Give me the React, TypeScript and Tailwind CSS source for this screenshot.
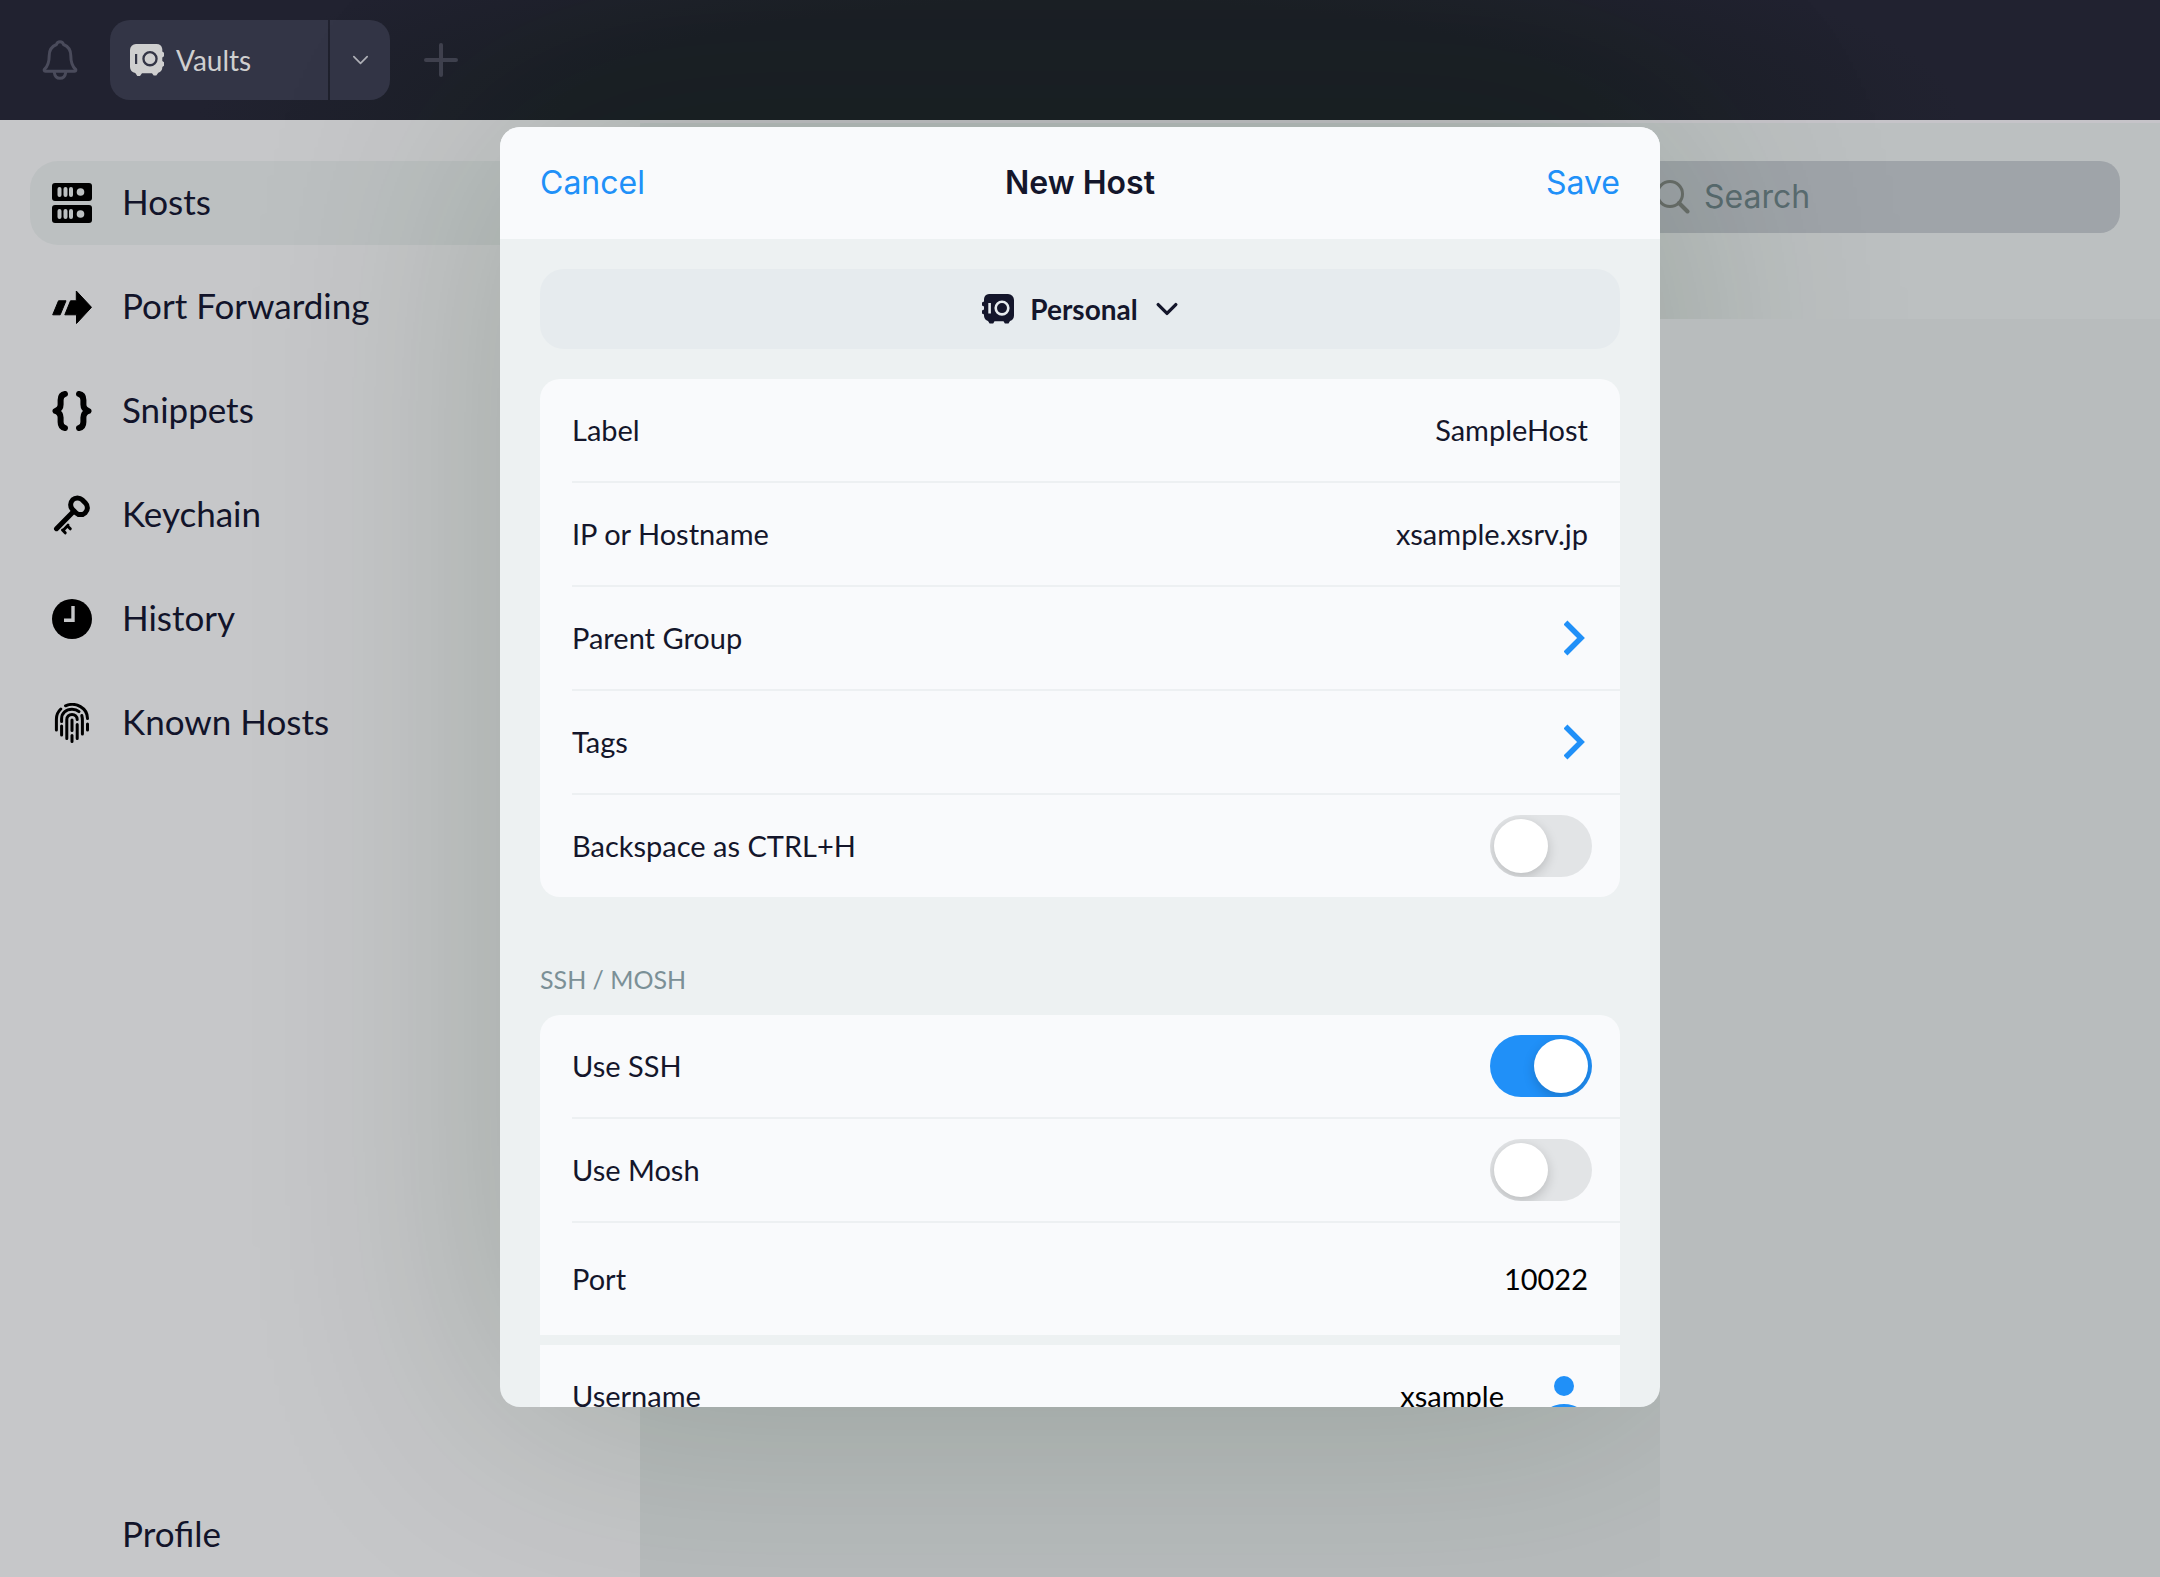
import { useId, useState } from "react";

interface IconProps {
  className?: string;
}

function BellIcon({ className }: IconProps) {
  return (
    <svg viewBox="0 0 36 40" className={className} fill="none" stroke="currentColor" strokeWidth="3" strokeLinejoin="round" strokeLinecap="round">
      <path d="M14.5 4.5a3.6 3.6 0 0 1 7 0c4.600 1.800 7.300 6 7.300 11.300 0 7.200 1.700 10.700 4.600 13.300.8.900.5 2.100-.7 2.100H3.300c-1.200 0-1.500-1.200-.7-2.100 2.900-2.600 4.600-6.100 4.600-13.300 0-5.300 2.700-9.500 7.300-11.300z" />
      <path d="M12.300 32.500c.5 3.600 2.700 5.800 5.700 5.800s5.200-2.200 5.700-5.800" />
    </svg>
  );
}

/* safe with the hinges on its right side */
function VaultIcon({ className }: IconProps) {
  return (
    <svg viewBox="0 0 34 33" className={className} fill="currentColor" fillRule="evenodd">
      <path d="M6 0h20.500a6 6 0 0 1 5.800 5v2.500l2 1.500v3l-2 1.500v3.500l2 1.500v3l-2 1.500v1a6 6 0 0 1-4 4.800l-2 2.700h-2.600L22 29.200H12l-2 2.800H7.300l-2-2.900A6.500 6.500 0 0 1 0 23V6a6 6 0 0 1 6-6zM5 10v10h2.200V10zM20 7a7.700 7.700 0 1 0 0 15.400A7.700 7.700 0 0 0 20 7zm0 2.300a5.400 5.400 0 1 1 0 10.800 5.400 5.400 0 0 1 0-10.800z" />
    </svg>
  );
}

/* safe with the hinges on its left side */
function PersonalVaultIcon({ className }: IconProps) {
  return (
    <svg viewBox="0 0 32 30" className={className} fill="currentColor" fillRule="evenodd">
      <path d="M7 0h19a6 6 0 0 1 6 6v15.500a6 6 0 0 1-4 5.500l-1.500 2.500h-3.600L21.500 27.300h-9L11.200 29.500H7.600L6 27a6 6 0 0 1-4-5v-1.500l-2-1v-3l2-1v-3l-2-1V8.500l2-1V5a5.500 5.500 0 0 1 5-5zM6.300 9v10.500h2.600V9zM20 6.500a7.600 7.600 0 1 0 0 15.200 7.600 7.600 0 0 0 0-15.200zm0 2.600a5 5 0 1 1 0 10 5 5 0 0 1 0-10z" />
    </svg>
  );
}

function HostsIcon({ className }: IconProps) {
  return (
    <svg viewBox="0 0 40 40" className={className} fill="currentColor">
      {[0, 22].map((y) => (
        <g key={y} transform={`translate(0 ${y})`}>
          <rect width="40" height="18" rx="3" />
          <g fill="#bcc0c1">
            <rect x="5.500" y="4" width="4" height="10" rx="2" />
            <rect x="11.500" y="4" width="4" height="10" rx="2" />
            <rect x="17" y="4" width="4" height="10" rx="2" />
            <circle cx="28.500" cy="9" r="3.800" />
          </g>
        </g>
      ))}
    </svg>
  );
}

function ForwardIcon({ className }: IconProps) {
  return (
    <svg viewBox="0 0 40 40" className={className} fill="currentColor" stroke="currentColor" strokeWidth="1" strokeLinejoin="round">
      <path d="M.700 27.800 6.500 13.800h7.500L8.200 27.800zM12.800 27.800l5.700-14h5.800V4L39.500 20.300 24.500 36.500v-8.700z" />
    </svg>
  );
}

function BracesIcon({ className }: IconProps) {
  return (
    <svg viewBox="0 0 40 40" className={className} fill="none" stroke="currentColor" strokeWidth="6" strokeLinecap="round" strokeLinejoin="round">
      <path d="M13 3C9.500 3.600 8.600 6 8.600 9v4.500c0 3.500-1.600 5.300-5.100 6.500 3.500 1.200 5.100 3 5.100 6.500V31c0 3 .9 5.400 4.400 6" />
      <path d="M27 3c3.500.6 4.400 3 4.400 6v4.500c0 3.500 1.600 5.300 5.100 6.500-3.500 1.200-5.100 3-5.100 6.500V31c0 3-.9 5.400-4.400 6" />
    </svg>
  );
}

function KeyIcon({ className }: IconProps) {
  return (
    <svg viewBox="0 0 40 40" className={className} fill="none" stroke="currentColor" strokeLinecap="round">
      <rect x="18" y="4.500" width="18" height="13.500" rx="6.700" strokeWidth="5" transform="rotate(45 27 11.250)" />
      <path d="M21.500 16.500 4.500 33.700" strokeWidth="5" />
      <path d="m10.500 35 2.700 2.800M15.500 31l2.800 2.800M11 35.500l5-5.300" strokeWidth="3" />
    </svg>
  );
}

function ClockIcon({ className }: IconProps) {
  return (
    <svg viewBox="0 0 40 40" className={className}>
      <circle cx="20" cy="20" r="20" fill="currentColor" />
      <path d="M21 7v14.300h-9" fill="none" stroke="#c6c7c9" strokeWidth="3.400" />
    </svg>
  );
}

function FingerprintIcon({ className }: IconProps) {
  return (
    <svg viewBox="0 0 40 40" className={className} fill="none" stroke="currentColor" strokeWidth="3" strokeLinecap="round">
      <path d="M13.500 2.800C24 -1.500 35.500 5 35.500 15.500M8.800 6C5.500 9 4.400 12 4.400 16v11" />
      <path d="M9.600 18.500v-2.800C9.600 10 14 6.300 20 6.300c3 0 5.300.8 7 2.300M29.800 12.500c.4 1.500.6 3 .6 5V31M9.600 23v9" />
      <path d="M14.800 35.500V16.500c0-3.200 2.200-5 5.200-5s5.200 1.800 5.200 5M25.200 21.500v14M20 17v10.500M20 32.500v6M35.500 21v6" />
    </svg>
  );
}

function ChevronDown({ className, width }: IconProps & { width: number }) {
  return (
    <svg viewBox="0 0 20 12" className={className} fill="none" stroke="currentColor" strokeWidth={width} strokeLinecap="round" strokeLinejoin="round">
      <path d="m2 2 8 8 8-8" />
    </svg>
  );
}

function ChevronRight() {
  return (
    <svg viewBox="0 0 24 36" className="h-9 w-6 text-[#2090f8]" fill="none" stroke="currentColor" strokeWidth="5.500">
      <path d="m1.500 2.500 15.500 15.500L1.500 33.500" />
    </svg>
  );
}

function UserIcon() {
  return (
    <svg viewBox="0 0 48 44" className="h-11 w-12 text-[#2090f8]" fill="currentColor">
      <circle cx="24" cy="12" r="10" />
      <ellipse cx="24" cy="46" rx="22" ry="16" />
    </svg>
  );
}

const navItems = [
  { label: "Hosts", Icon: HostsIcon, active: true },
  { label: "Port Forwarding", Icon: ForwardIcon },
  { label: "Snippets", Icon: BracesIcon },
  { label: "Keychain", Icon: KeyIcon },
  { label: "History", Icon: ClockIcon },
  { label: "Known Hosts", Icon: FingerprintIcon },
];

function TopBar() {
  return (
    <header className="flex h-[120px] shrink-0 items-center bg-[radial-gradient(60%_250%_at_50%_100%,#1b1f26_40%,#212230_68%)] pl-[42px]">
      <button aria-label="Notifications" className="text-[#4a4b5b]">
        <BellIcon className="h-10 w-9" />
      </button>
      <div className="ml-8 flex h-20 gap-0.5 overflow-hidden rounded-[20px]">
        <button className="flex w-[218px] items-center gap-3 bg-[#333546] pl-5 text-[28px] text-[#cfcfcf]">
          <VaultIcon className="h-[33px] w-[34px]" />
          Vaults
        </button>
        <button aria-label="Switch tab" className="flex w-[60px] items-center justify-center bg-[#333546] text-[#b0b1b8]">
          <ChevronDown className="h-[10px] w-[17px]" width={2} />
        </button>
      </div>
      <button aria-label="New tab" className="ml-[34px] text-[#40424f]">
        <svg viewBox="0 0 34 34" className="size-[34px]" fill="none" stroke="currentColor" strokeWidth="4" strokeLinecap="round">
          <path d="M17 2v30M2 17h30" />
        </svg>
      </button>
    </header>
  );
}

function Sidebar() {
  return (
    <aside className="flex w-[640px] shrink-0 flex-col justify-between bg-[#c6c7c9] px-[30px] pt-[41px] text-[35px] text-[#12142a]">
      <nav className="flex flex-col gap-5">
        {navItems.map(({ label, Icon, active }) => (
          <a
            key={label}
            href="#"
            className={`flex h-[84px] items-center gap-[30px] rounded-[28px] pl-[22px] ${active ? "bg-[#bcc0c1]" : ""}`}
          >
            <Icon className="size-10 text-black" />
            <span className="pb-1">{label}</span>
          </a>
        ))}
      </nav>
      <a href="#" className="flex h-[84px] items-center pl-[92px]">
        <span className="pb-1">Profile</span>
      </a>
    </aside>
  );
}

function SearchBar() {
  return (
    <div className="flex h-[199px] shrink-0 items-start justify-end border-t-[3px] border-[#c6c4c9] bg-[#bcc0c1] px-10 pt-[38px]">
      <label className="flex h-[72px] w-[480px] items-center gap-[14px] rounded-[20px] bg-[#9fa4a9] pl-4 font-['Inter',sans-serif]">
        <svg viewBox="0 0 34 34" className="size-[34px] text-[#6a6e6b]" fill="none" stroke="currentColor" strokeWidth="3" strokeLinecap="round">
          <circle cx="14" cy="14" r="12.500" />
          <path d="m23 23 8.500 8.500" strokeWidth="4" />
        </svg>
        <input
          type="search"
          aria-label="Search"
          placeholder="Search"
          className="min-w-0 flex-1 bg-transparent text-[32px] outline-none placeholder:text-[#5a6c70]"
        />
      </label>
    </div>
  );
}

interface RowProps {
  label: string;
  htmlFor?: string;
  divider?: boolean;
  className?: string;
  children: React.ReactNode;
}

function Row({ label, htmlFor, divider = true, className = "h-[102px]", children }: RowProps) {
  return (
    <div className={`ml-8 box-content flex items-center justify-between pr-8 ${className} ${divider ? "border-b-2 border-[#edf0f2]" : ""}`}>
      <label htmlFor={htmlFor}>{label}</label>
      {children}
    </div>
  );
}

function TextRow({ label, value }: { label: string; value: string }) {
  const id = useId();
  return (
    <Row label={label} htmlFor={id}>
      <input id={id} defaultValue={value} className="min-w-0 flex-1 bg-transparent text-right outline-none" />
    </Row>
  );
}

function LinkRow({ label }: { label: string }) {
  const id = useId();
  return (
    <Row label={label} htmlFor={id}>
      <button id={id}>
        <ChevronRight />
      </button>
    </Row>
  );
}

function SwitchRow({ label, initial = false, divider }: { label: string; initial?: boolean; divider?: boolean }) {
  const id = useId();
  const [on, setOn] = useState(initial);
  return (
    <Row label={label} htmlFor={id} divider={divider}>
      <input
        id={id}
        type="checkbox"
        role="switch"
        checked={on}
        onChange={(e) => setOn(e.target.checked)}
        className="-mr-1 flex h-[62px] w-[102px] shrink-0 appearance-none items-center overflow-hidden rounded-full bg-[#e2e4e6] px-1 before:size-[54px] before:rounded-full before:bg-white before:shadow-[0_4px_12px_rgba(0,0,0,0.18)] checked:justify-end checked:bg-[#2090f8]"
      />
    </Row>
  );
}

function NewHostDialog() {
  return (
    <div
      role="dialog"
      aria-label="New Host"
      className="flex min-h-0 w-full max-w-[1160px] flex-1 flex-col overflow-hidden rounded-[20px] bg-[#edf1f2] text-[#14162b] shadow-[0_0_260px_rgba(0,40,0,0.2)]"
    >
      <div className="grid h-28 shrink-0 grid-cols-3 items-center bg-[#f9fafc] px-10 font-['Inter',sans-serif] text-[32px]">
        <button className="justify-self-start text-[#2090f8]">Cancel</button>
        <h1 className="text-center font-semibold">New Host</h1>
        <button className="justify-self-end text-[#2090f8]">Save</button>
      </div>

      <div className="flex-1 overflow-y-auto px-10 pt-[30px] text-[29px] [scrollbar-width:none]">
        <label className="flex h-20 items-center justify-center rounded-[24px] bg-[#e6ebee]">
          <PersonalVaultIcon className="h-[30px] w-8" />
          <select aria-label="Vault" className="ml-4 appearance-none bg-transparent text-[28px] font-bold [field-sizing:content]">
            <option>Personal</option>
          </select>
          <ChevronDown className="ml-[18px] h-[14px] w-[22px]" width={3} />
        </label>

        <div className="mt-[30px] rounded-[20px] bg-[#f9fafc]">
          <TextRow label="Label" value="SampleHost" />
          <TextRow label="IP or Hostname" value="xsample.xsrv.jp" />
          <LinkRow label="Parent Group" />
          <LinkRow label="Tags" />
          <SwitchRow label="Backspace as CTRL+H" divider={false} />
        </div>

        <h2 className="mt-[66px] text-[25px] leading-8 text-[#7b9097]">SSH / MOSH</h2>
        <div className="mt-5 rounded-t-[20px] bg-[#f9fafc]">
          <SwitchRow label="Use SSH" initial />
          <SwitchRow label="Use Mosh" />
          <Row label="Port" htmlFor="port" divider={false} className="h-28">
            <input id="port" inputMode="numeric" defaultValue="10022" className="min-w-0 flex-1 bg-transparent text-right text-black outline-none" />
          </Row>
        </div>
        <div className="mt-2.5 bg-[#f9fafc]">
          <Row label="Username" htmlFor="username">
            <input id="username" defaultValue="xsample" className="mr-9 min-w-0 flex-1 bg-transparent text-right text-black outline-none" />
            <button aria-label="Choose identity">
              <UserIcon />
            </button>
          </Row>
        </div>
      </div>
    </div>
  );
}

export default function App() {
  return (
    <div className="relative flex h-screen flex-col overflow-hidden font-['Lato',sans-serif]">
      <TopBar />
      <div className="flex min-h-0 flex-1">
        <Sidebar />
        <main className="flex min-w-0 flex-1 flex-col bg-[#b8bcbd]">
          <SearchBar />
        </main>
      </div>
      <div className="absolute inset-0 flex flex-col items-center pt-[127px] pb-[170px]">
        <NewHostDialog />
      </div>
      {/* content panel stays clear of the dialog shadow */}
      <div className="absolute top-[319px] right-0 bottom-0 left-[calc(50%+580px)] bg-[#b8bcbd]" />
    </div>
  );
}
